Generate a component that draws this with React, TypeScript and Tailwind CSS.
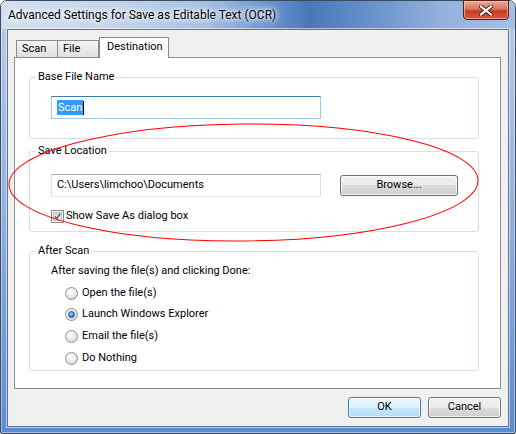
import React from "react";

function Radio({ checked, label }: { checked?: boolean; label: string }) {
  return (
    <div className="flex items-center h-[16px] ml-[35px]">
      <div className="relative w-[13px] h-[13px] rounded-full border border-[#8e8f8f] bg-[radial-gradient(circle_at_40%_35%,#ffffff_0%,#ececec_45%,#c9c9c9_100%)] flex items-center justify-center">
        {checked && (
          <div className="w-[7px] h-[7px] rounded-full border border-[#1d4f8c] bg-[radial-gradient(circle_at_40%_35%,#a9dcff_0%,#3f8fd8_55%,#13508f_100%)]" />
        )}
      </div>
      <span className="ml-[4px] leading-[16px]">{label}</span>
    </div>
  );
}

function Btn({ children, w, def }: { children: React.ReactNode; w: string; def?: boolean }) {
  return (
    <div
      className={
        "h-[21px] flex items-center justify-center rounded-[3px] border shadow-[inset_0_0_0_1px_rgba(255,255,255,0.75)] " +
        w +
        (def
          ? " border-[#3c7fb1] bg-[linear-gradient(#eaf6fd_0%,#dcf1fc_50%,#c4e7fb_50%,#b3ddf6_100%)]"
          : " border-[#707070] bg-[linear-gradient(#f2f2f2_0%,#ebebeb_50%,#dddddd_50%,#cfcfcf_100%)]")
      }
    >
      {children}
    </div>
  );
}

export default function App() {
  return (
    <div className="relative w-[516px] h-[434px] overflow-hidden font-['Roboto',sans-serif] text-[11px] text-black bg-white">
      <div className="w-[516px] h-[434px] flex flex-col rounded-t-[7px] rounded-b-[2px] border border-[#3a4a60] bg-[linear-gradient(180deg,#b9cde9_0%,#94b3de_45%,#5c8bd2_100%)] shadow-[inset_0_0_0_1px_rgba(255,255,255,0.45)]">
        {/* Title bar */}
        <div className="h-[28px] flex rounded-t-[6px] bg-[linear-gradient(90deg,#d3e0f0_0%,#c3d5ec_22%,#a4c0e4_40%,#6b95cd_52%,#4a77ba_60%,#6892cc_72%,#94b2dc_86%,#a6c0e3_100%)]">
          <div className="pl-[7px] h-[28px] flex items-center text-[12px] [text-shadow:0_0_10px_#ffffff,0_0_6px_#ffffff,0_0_3px_#ffffff]">
            Advanced Settings for Save as Editable Text (OCR)
          </div>
          <div className="ml-auto mr-[6px] -mt-px w-[46px] h-[20px] rounded-b-[4px] border border-[#5b1a12] bg-[linear-gradient(#eaa998_0%,#d7765f_45%,#c43c22_55%,#d65a3e_100%)] shadow-[inset_0_0_0_1px_rgba(255,210,200,0.55)] flex items-center justify-center">
            <svg width="14" height="11" viewBox="0 0 14 11">
              <path d="M2 1.5 L12 9.5 M12 1.5 L2 9.5" stroke="#4a1a12" strokeWidth="4" strokeLinecap="square" />
              <path d="M2 1.5 L12 9.5 M12 1.5 L2 9.5" stroke="#ffffff" strokeWidth="2.2" strokeLinecap="square" />
            </svg>
          </div>
        </div>

        {/* Client area */}
        <div className="mx-[6px] h-[398px] border border-[#5d7393] bg-[#f0f0f0] shadow-[0_0_0_1px_rgba(255,255,255,0.55)] flex flex-col">
          {/* Tabs */}
          <div className="pt-[7px]">
            <div className="ml-[8px] h-[20px] flex items-end">
              <div className="w-[42px] h-[17px] border-t border-x border-[#898c95] bg-[linear-gradient(#f4f4f4,#e0e0e0)] pl-[5px] leading-[16px]">
                Scan
              </div>
              <div className="w-[41px] h-[17px] border-t border-r border-[#898c95] bg-[linear-gradient(#f4f4f4,#e0e0e0)] pl-[5px] leading-[16px]">
                File
              </div>
              <div className="relative z-10 -mb-px w-[70px] h-[21px] border-t border-x border-[#898c95] bg-white pl-[7px] leading-[18px]">
                Destination
              </div>
            </div>
          </div>

          {/* Panel */}
          <div className="ml-[6px] w-[487px] h-[332px] border border-[#898c95] bg-white">
            <div className="ml-[14px] w-[450px]">
              {/* Base File Name */}
              <fieldset className="mt-[11px] border border-[#d5dfe5] rounded-[3px] pb-[19px]">
                <legend className="ml-[6px] px-[2px] leading-[16px]">Base File Name</legend>
                <div className="mt-[11px] ml-[21px] w-[270px] h-[23px] border border-[#a4c9e3] border-t-[#3d7bad] bg-white flex items-center pl-[5px]">
                  <span className="bg-[#3399ff] text-white leading-[15px] px-px">Scan</span>
                  <span className="w-px h-[14px] bg-black" />
                </div>
              </fieldset>

              {/* Save Location */}
              <fieldset className="mt-[4px] border border-[#d5dfe5] rounded-[3px] pb-[7px]">
                <legend className="ml-[6px] px-[2px] leading-[16px]">Save Location</legend>
                <div className="mt-[15px] ml-[21px] flex items-center">
                  <div className="w-[270px] h-[23px] border border-[#dbdfe6] border-t-[#abadb3] border-b-[#e3e9ef] bg-white flex items-center pl-[5px]">
                    C:\Users\limchoo\Documents
                  </div>
                  <div className="ml-[19px]">
                    <Btn w="w-[118px]">Browse...</Btn>
                  </div>
                </div>
                <div className="mt-[11px] ml-[21px] h-[16px] flex items-center">
                  <div className="w-[13px] h-[13px] border border-[#8f8f8f] bg-[#f4f4f4] p-px">
                    <div className="w-full h-full border border-[#c4c4c4] bg-[linear-gradient(#d8d8d8,#eeeeee)] flex items-center justify-center">
                      <svg width="9" height="9" viewBox="0 0 9 9">
                        <path d="M1 4.5 L3.5 7 L8 1" stroke="#4a5f8c" strokeWidth="1.8" fill="none" />
                      </svg>
                    </div>
                  </div>
                  <span className="ml-[2px] leading-[16px]">Show Save As dialog box</span>
                </div>
              </fieldset>

              {/* After Scan */}
              <fieldset className="mt-[11px] border border-[#d5dfe5] rounded-[3px] pb-[4px]">
                <legend className="ml-[6px] px-[2px] leading-[16px]">After Scan</legend>
                <div className="mt-[4px] ml-[21px] leading-[16px]">After saving the file(s) and clicking Done:</div>
                <div className="mt-[6px]">
                  <Radio label="Open the file(s)" />
                </div>
                <div className="mt-[5px]">
                  <Radio checked label="Launch Windows Explorer" />
                </div>
                <div className="mt-[6px]">
                  <Radio label="Email the file(s)" />
                </div>
                <div className="mt-[6px]">
                  <Radio label="Do Nothing" />
                </div>
              </fieldset>
            </div>
          </div>

          {/* Buttons */}
          <div className="mt-[8px] mr-[7px] flex justify-end gap-[7px]">
            <Btn w="w-[73px]" def>
              OK
            </Btn>
            <Btn w="w-[73px]">Cancel</Btn>
          </div>
        </div>
      </div>

      {/* Red annotation ellipse */}
      <svg className="absolute left-0 top-0 pointer-events-none" width="516" height="434" viewBox="0 0 516 434">
        <ellipse cx="243.5" cy="182.5" rx="234.5" ry="58.5" fill="none" stroke="#ff0000" strokeWidth="1" transform="rotate(-0.5 243.5 182.5)" />
      </svg>
    </div>
  );
}
